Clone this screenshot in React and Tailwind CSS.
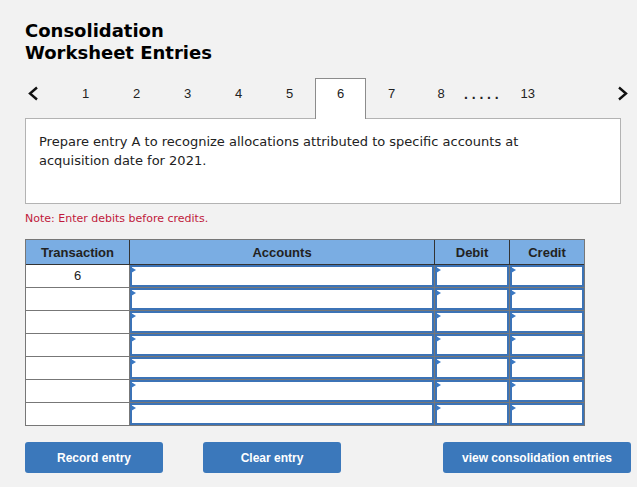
import React from "react";

const Chevron = ({ dir }) => (
  <svg width="12" height="15" viewBox="0 0 12 15" className="block">
    <path
      d={dir === "left" ? "M10 1.5 L3 7.5 L10 13.5" : "M2 1.5 L9 7.5 L2 13.5"}
      fill="none"
      stroke="#111"
      strokeWidth="2.4"
    />
  </svg>
);

const InputCell = ({ w, last }) => (
  <div className={`${w} h-full ${last ? "" : "border-r border-[#777]"} bg-white`}>
    <div className="relative h-full border-2 border-[#3c73b6] bg-white">
      <div className="absolute -left-[1px] top-0 w-0 h-0 border-y-[3px] border-y-transparent border-l-[5px] border-l-[#3a78c2]" />
    </div>
  </div>
);

export default function App() {
  const tabs = [1, 2, 3, 4, 5, 6, 7];
  const rows = [0, 1, 2, 3, 4, 5, 6];
  return (
    <div className="min-h-[487px] w-[637px] bg-[#f2f2f2] pl-[25px] pt-[20px] overflow-hidden">
      <h1
        className="text-[18px] leading-[22px] font-bold text-black"
        style={{ fontFamily: '"DejaVu Sans", Verdana, sans-serif' }}
      >
        Consolidation
        <br />
        Worksheet Entries
      </h1>

      <div
        className="mt-[14px] flex items-start h-[40px] text-[13px] leading-[16px] text-[#222]"
        style={{ fontFamily: '"Liberation Sans", Arial, sans-serif' }}
      >
        <div className="w-[35px] pt-[8px] pl-[2px]">
          <Chevron dir="left" />
        </div>
        {tabs.map((t) =>
          t === 6 ? (
            <div
              key={t}
              className="relative z-10 w-[51px] h-[41px] border-t border-x border-[#8c8c8c] bg-white text-center pt-[7px]"
            >
              {t}
            </div>
          ) : (
            <div key={t} className="w-[51px] h-[40px] text-center pt-[8px]">
              {t}
            </div>
          )
        )}
        <div className="w-[48px] text-center pt-[8px]">8</div>
        <div className="pt-[8px] font-bold text-[14px] tracking-[3.8px] ml-[-1px]">.....</div>
        <div className="pt-[8px] ml-[18px]">13</div>
        <div className="pt-[8px] ml-[82px]">
          <Chevron dir="right" />
        </div>
      </div>

      <div
        className="w-[596px] h-[86px] border border-[#b3b3b3] bg-white pl-[13px] pt-[13px] text-[13px] leading-[19px] text-[#222]"
        style={{ fontFamily: '"DejaVu Sans", Verdana, sans-serif' }}
      >
        Prepare entry A to recognize allocations attributed to specific accounts at
        <br />
        acquisition date for 2021.
      </div>

      <p
        className="mt-[8px] text-[11px] leading-[14px] text-[#c0193b]"
        style={{ fontFamily: '"DejaVu Sans", Verdana, sans-serif' }}
      >
        Note: Enter debits before credits.
      </p>

      <div
        className="mt-[13px] w-[560px] border-x border-t border-[#777]"
        style={{ fontFamily: '"Liberation Sans", Arial, sans-serif' }}
      >
        <div className="flex h-[25px] bg-[#7aade3] border-b border-[#333] text-[13px] font-bold text-[#222]">
          <div className="w-[104px] border-r border-[#333] flex items-center justify-center pt-px">Transaction</div>
          <div className="w-[305px] border-r border-[#333] flex items-center justify-center pt-px">Accounts</div>
          <div className="w-[75px] border-r border-[#333] flex items-center justify-center pt-px">Debit</div>
          <div className="flex-1 flex items-center justify-center pt-px">Credit</div>
        </div>
        {rows.map((r) => (
          <div key={r} className="flex h-[23px] border-b border-[#777]">
            <div className="w-[104px] border-r border-[#777] bg-white flex items-center justify-center text-[13px] text-[#222]">
              {r === 0 ? "6" : ""}
            </div>
            <InputCell w="w-[305px]" />
            <InputCell w="w-[75px]" />
            <InputCell w="flex-1" last />
          </div>
        ))}
      </div>

      <div
        className="mt-[16px] flex text-[12px] font-bold text-white"
        style={{ fontFamily: '"Liberation Sans", Arial, sans-serif' }}
      >
        <button className="w-[138px] h-[31px] rounded-[3px] bg-[#3b78bb]">Record entry</button>
        <button className="ml-[40px] w-[138px] h-[31px] rounded-[3px] bg-[#3b78bb]">Clear entry</button>
        <button className="ml-[102px] w-[188px] h-[31px] rounded-[3px] bg-[#3b78bb]">view consolidation entries</button>
      </div>
    </div>
  );
}
